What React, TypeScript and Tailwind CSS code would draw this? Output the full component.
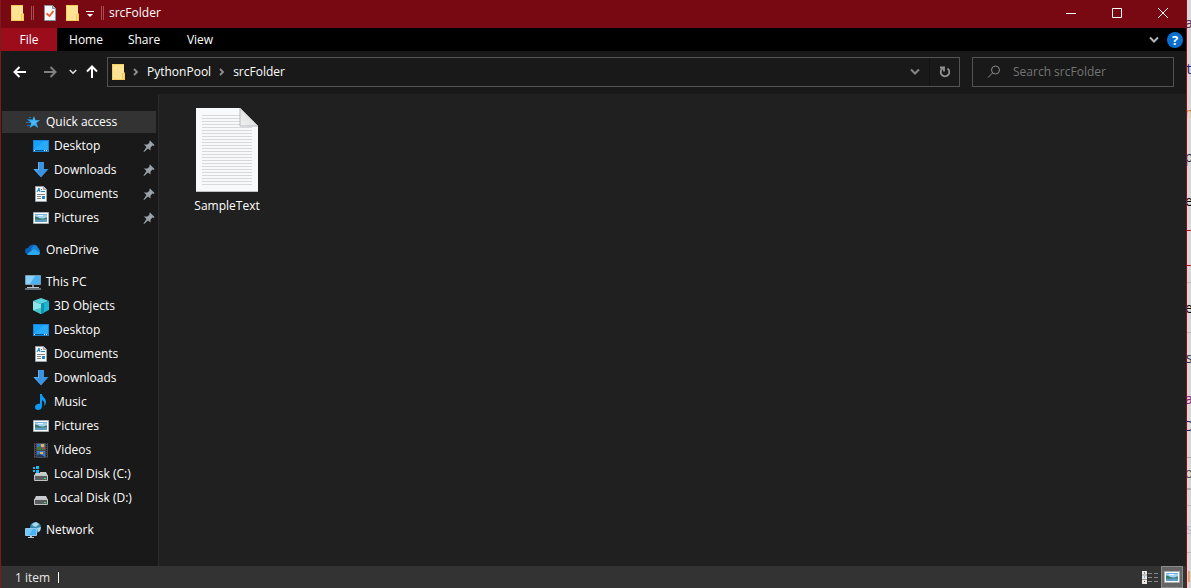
import React from "react";

type IconProps = { className?: string };

const Folder = ({ className = "" }: IconProps) => (
  <svg viewBox="0 0 16 18" className={`w-4 h-[18px] shrink-0 ${className}`}>
    <path d="M1 1h12v8l1 1v7H1z" fill="#ffe394" />
    <path d="M1 1h12v1H1zM1 1h1v16H1zM1 16h13v1H1z" fill="#f5cf5c" />
    <path d="M11 10h3v7h-3z" fill="#f3c94f" />
    <path d="M12 11h1v5h-1z" fill="#ffe08a" />
  </svg>
);

const CheckPage = () => (
  <svg viewBox="0 0 14 18" className="w-3.5 h-[18px] shrink-0">
    <path d="M1.500 1.500h8l3 3v12h-11z" fill="#f4f6f8" stroke="#8793a0" />
    <path d="M9.500 1.500v3h3" fill="#c7d0d8" stroke="#8793a0" />
    <path d="M3.500 9.500l3 2.500 4-5" fill="none" stroke="#e8592b" strokeWidth="1.800" />
  </svg>
);

const Star = () => (
  <svg viewBox="0 0 16 16" className="w-4 h-4">
    <path d="M9 2l1.500 4.200L15 6l-3.500 3 1.700 5L9 11.200 4.500 14l1.700-5L3 6h4.300z" fill="#35adf5" />
    <path d="M2 5.500h5M1 8.500h5M2 11.500h4M4 3.500h2" stroke="#1d75b8" />
    <path d="M9 4l1 3h3l-3 2 1 3-2-2-3 2 1-3-2-2h3z" fill="#49b9fa" />
  </svg>
);

const Desktop = () => (
  <svg viewBox="0 0 16 16" className="w-4 h-4">
    <path d="M0 2h16v12H0z" fill="#1683dc" />
    <path d="M1 3h14v9H1z" fill="#18a0fb" />
    <path d="M1 12L11 3h4v9z" fill="#33b1ff" opacity=".6" />
    <path d="M1 12h14v1H1z" fill="#0b568f" />
    <path d="M1 12h1v1H1zM11 12h1v1h-1zM13 12h1v1h-1z" fill="#fff" />
  </svg>
);

const Download = () => (
  <svg viewBox="0 0 16 16" className="w-4 h-4">
    <path d="M5 0h6v7h4.500L8 15.500.5 7H5z" fill="#3a93e0" />
    <path d="M5 0h1v8H2.500L8 15 .5 7H5z" fill="#64b0ee" />
  </svg>
);

const Document = () => (
  <svg viewBox="0 0 16 16" className="w-4 h-4">
    <path d="M2.500.5h8l3 3v12h-11z" fill="#f7f8f9" stroke="#9a9fa4" />
    <path d="M10.500.5v3h3" fill="#d5d9dc" stroke="#9a9fa4" />
    <path d="M4 6l2-4 1 4M5 4.500h2M8 3.500h1M8 5.500h4" fill="none" stroke="#2284cf" />
    <path d="M4 8.500h8M4 10.500h4M4 12.500h4" stroke="#7d8790" />
    <path d="M9 10h3v3H9z" fill="#2588b8" />
  </svg>
);

const Picture = () => (
  <svg viewBox="0 0 16 16" className="w-4 h-4">
    <path d="M.5 2.500h15v11H.5z" fill="#fff" stroke="#a7acb0" />
    <path d="M2 4h12v8H2z" fill="#a5d2f7" />
    <path d="M2 4h12v1H2z" fill="#6faee8" />
    <path d="M2 6.500c3 0 4 2 7 2s3-1 5-1V10H2z" fill="#3a7a6b" />
    <path d="M2 9.500c5 1 8-1 12 0V12H2z" fill="#5d9cc6" />
    <path d="M5 5h5v1H5z" fill="#f0f8ff" />
  </svg>
);

const OneDrive = () => (
  <svg viewBox="0 0 16 16" className="w-4 h-4">
    <path d="M3 12a3 3 0 0 1 0-6 5 5 0 0 1 9-1 4 4 0 0 1 1 7z" fill="#0c5fb4" />
    <path d="M6 7l3-4a4 4 0 0 1 4 4 3 3 0 0 1 1 5H8z" fill="#1686dc" />
    <path d="M2 12l7-5 6 4-1 2H4q-2 0-2-1z" fill="#2ba9ed" />
  </svg>
);

const Computer = () => (
  <svg viewBox="0 0 16 16" className="w-4 h-4">
    <path d="M.5 1.500h15v9H.5z" fill="#49b2f5" stroke="#7c9aad" />
    <path d="M1 2h9l-5 8H1z" fill="#8bd0fb" />
    <path d="M7 11h2v2H7z" fill="#8498a5" />
    <path d="M2 13.500h12M0 15h16" stroke="#b9c7d0" />
  </svg>
);

const Cube = () => (
  <svg viewBox="0 0 16 16" className="w-4 h-4">
    <path d="M8 0l8 3-8 3-8-3z" fill="#56d4e2" />
    <path d="M0 3l8 3v10l-8-4z" fill="#8ce6ea" />
    <path d="M16 3L8 6v10l8-4z" fill="#1ab4d4" />
    <path d="M8 10v6l-8-4z" fill="#45c5c8" />
    <path d="M8 6l3-1v10l-3 1z" fill="#0f94ad" />
  </svg>
);

const Music = () => (
  <svg viewBox="0 0 16 16" className="w-4 h-4">
    <path d="M7 0h2c0 3 4 4 4 8 0 2-1 3-2 4 1-3 0-5-2-6v6c0 3-2 4-4 4s-3-1-3-3 3-4 5-3z" fill="#0a9bf5" />
  </svg>
);

const Video = () => (
  <svg viewBox="0 0 16 16" className="w-4 h-4">
    <path d="M1 1h14v15H1z" fill="#4b4b4b" />
    <path d="M2.500 1v15M13.500 1v15" stroke="#191919" strokeDasharray="1 1" />
    <path d="M4 2h8v6H4zM4 9h8v6H4z" fill="#3978d0" />
    <path d="M4 6l3-2 5 4H4z" fill="#45733b" />
    <path d="M8 2h3v3H8zM7 10h3v2H7z" fill="#e9b548" />
    <path d="M10 5h2v2h-2z" fill="#c43d3d" />
    <path d="M4 13l3-1 5 3H4z" fill="#263b59" />
  </svg>
);

const Disk = ({ windows = false }: { windows?: boolean }) => (
  <svg viewBox="0 0 16 16" className="w-4 h-4">
    <path d="M3 6h10l2 4H1z" fill="#c8cbcd" />
    <path d="M1 10h14v4H1z" fill="#5b5e60" />
    <path d="M1 9.500h14M1.500 10v4.500h13V10" fill="none" stroke="#bfc3c5" />
    <path d="M11 12h2v1h-2z" fill="#3de254" />
    {windows && (
      <>
        <path d="M0 0h7v7H0z" fill="#191919" />
        <path d="M0 1h2v2H0zM3 0h3v3H3zM0 4h2v2H0zM3 4h3v3H3z" fill="#16b9f4" />
      </>
    )}
  </svg>
);

const Network = () => (
  <svg viewBox="0 0 16 16" className="w-4 h-4">
    <circle cx="10.500" cy="5.500" r="5.500" fill="#3c88ad" />
    <path d="M7 2l4-2 3 2-3 3-3-1zM12 6l4-1-1 4-2 1z" fill="#a9d9e9" />
    <path d="M.5 6.500h11v7H.5z" fill="#45b3f7" stroke="#93c9eb" />
    <path d="M1 7h7l-4 6H1z" fill="#75c8fb" />
    <path d="M5 14h2v1H5zM3 15h6v1H3z" fill="#b9c7d0" />
  </svg>
);

const Pin = () => (
  <svg viewBox="0 0 12 12" className="w-3 h-3">
    <path d="M7 .5L11.500 5l-1 1-1-.5-2 2v3L5 8.500 1 12l-.5-.5L3.500 7 1 4.500h3.500l2-2V1z" fill="#9aa3ab" />
  </svg>
);

const Chevron = ({ className = "" }: IconProps) => (
  <svg viewBox="0 0 10 8" className={`h-2 ${className}`}>
    <path d="M1 1.500l4 4 4-4" fill="none" stroke="currentColor" strokeWidth="2" />
  </svg>
);

const Separator = () => (
  <svg viewBox="0 0 6 12" className="w-1.5 h-3 text-[#8f8f8f]">
    <path d="M1 3l3 3-3 3" fill="none" stroke="currentColor" strokeWidth="1.800" />
  </svg>
);

const Arrow = ({ className = "" }: IconProps) => (
  <svg viewBox="0 0 14 12" className={`w-3.5 h-3 ${className}`}>
    <path d="M13 6H2M6.500 1L1.500 6l5 5" fill="none" stroke="currentColor" strokeWidth="2" />
  </svg>
);

const Sheet = () => (
  <svg viewBox="0 0 64 86" className="w-16 h-[86px]">
    <defs>
      <linearGradient id="fold" x1="0" y1="1" x2="1" y2="0">
        <stop offset="0" stopColor="#f4f4f4" />
        <stop offset="1" stopColor="#cfcfcf" />
      </linearGradient>
    </defs>
    <path d="M1 1h44l18 18v65H1z" fill="#f8f9fa" />
    <path d="M1 84.500h62" stroke="#bfc2c4" />
    {Array.from({ length: 24 }, (_, i) => (
      <path key={i} d={`M7 ${8.5 + i * 3}h${i < 4 ? 38 : 50}`} stroke="#d6d8d9" />
    ))}
    <path d="M45 1l18 18H45z" fill="url(#fold)" stroke="#b5b7b8" />
  </svg>
);

const groups = [
  {
    name: "Quick access",
    icon: <Star />,
    selected: true,
    items: [
      { name: "Desktop", icon: <Desktop />, pinned: true },
      { name: "Downloads", icon: <Download />, pinned: true },
      { name: "Documents", icon: <Document />, pinned: true },
      { name: "Pictures", icon: <Picture />, pinned: true },
    ],
  },
  { name: "OneDrive", icon: <OneDrive />, items: [] },
  {
    name: "This PC",
    icon: <Computer />,
    items: [
      { name: "3D Objects", icon: <Cube /> },
      { name: "Desktop", icon: <Desktop /> },
      { name: "Documents", icon: <Document /> },
      { name: "Downloads", icon: <Download /> },
      { name: "Music", icon: <Music /> },
      { name: "Pictures", icon: <Picture /> },
      { name: "Videos", icon: <Video /> },
      { name: "Local Disk (C:)", icon: <Disk windows /> },
      { name: "Local Disk (D:)", icon: <Disk /> },
    ],
  },
  { name: "Network", icon: <Network />, items: [] },
];

// edge of the page that sits behind the window
const behind = [
  { text: "a", style: "h-[46px] text-[#4a2a6a]" },
  { text: "t", style: "h-[45px] text-[#1d2b6b]" },
  { text: "n", style: "h-11 text-[#c9822f]" },
  { text: "p", style: "h-11 text-[#1d1d4d]" },
  { text: "e", style: "h-11 text-black" },
  { text: "", style: "h-2 border-b border-[#b3121f]" },
  { text: "", style: "h-[35px] border-b border-[#b3121f]" },
  { text: "", style: "h-[17px] border-b border-[#bbb]" },
  { text: "e", style: "h-[50px] border-b border-[#bbb] text-black" },
  { text: "s", style: "h-[50px] text-[#2b3553]" },
  { text: "a", style: "h-8 text-[#7a2a8f]" },
  { text: "D", style: "h-[22px] text-[#1c1c6e]" },
  { text: "", style: "h-[21px] border-b border-[#aaa]" },
  { text: "o", style: "h-8 border-b-2 border-[#aaa] text-[#555]" },
  { text: "", style: "h-4 border-b border-[#bbb]" },
  { text: "s", style: "h-[47px] border-b border-[#bbb] text-[#b9bccb]" },
  { text: "l", style: "h-[35px] text-[#d98a1c] pt-3" },
];

const TitleBar = () => (
  <header className="flex h-7 items-center bg-[#780912] pb-0.5 pl-[9px]">
    <Folder />
    <div className="ml-[5px] h-3.5 w-[3px] border-x border-[#a84d54]" />
    <button aria-label="Properties" className="ml-[9px]">
      <CheckPage />
    </button>
    <button aria-label="New folder" className="ml-2">
      <Folder />
    </button>
    <button aria-label="Customize toolbar" className="ml-[5px] pt-0.5">
      <svg viewBox="0 0 8 8" className="w-2 h-2">
        <path d="M0 1.500h8" stroke="#fff" />
        <path d="M1 4h6L4 7z" fill="#fff" />
      </svg>
    </button>
    <div className="ml-[7px] h-3.5 w-[3px] border-x border-[#a84d54]" />
    <h1 className="ml-[5px]">srcFolder</h1>
    <div className="ml-auto flex h-full">
      <button aria-label="Minimize" className="flex w-[46px] items-center justify-center">
        <svg viewBox="0 0 10 10" className="w-2.5 h-2.5">
          <path d="M0 5.500h10" stroke="#fff" />
        </svg>
      </button>
      <button aria-label="Maximize" className="flex w-[46px] items-center justify-center">
        <svg viewBox="0 0 10 10" className="w-2.5 h-2.5">
          <path d="M.5.500h9v9h-9z" fill="none" stroke="#fff" />
        </svg>
      </button>
      <button aria-label="Close" className="flex w-[46px] items-center justify-center">
        <svg viewBox="0 0 10 10" className="w-2.5 h-2.5">
          <path d="M0 0l10 10M10 0L0 10" stroke="#fff" />
        </svg>
      </button>
    </div>
  </header>
);

const Ribbon = () => (
  <nav className="flex h-[23px] items-stretch bg-black">
    <button className="w-14 bg-[#9b0d1b]">File</button>
    <button className="w-[58px]">Home</button>
    <button className="w-[58px]">Share</button>
    <button className="w-[54px]">View</button>
    <div className="ml-auto flex items-center gap-1 pr-[3px]">
      <button aria-label="Expand ribbon" className="p-1">
        <Chevron className="w-2.5 text-[#b5b5b5]" />
      </button>
      <button
        aria-label="Help"
        className="h-4 w-4 rounded-full bg-[#0b6fd0] text-[13px] font-bold leading-4"
      >
        ?
      </button>
    </div>
  </nav>
);

const AddressBar = () => (
  <div className="flex h-[43px] items-start bg-[#191919] pt-1.5 pr-3">
    <div className="flex h-[30px] w-[106px] shrink-0 items-center pl-3">
      <button aria-label="Back">
        <Arrow />
      </button>
      <button aria-label="Forward" className="ml-4">
        <Arrow className="rotate-180 text-[#808080]" />
      </button>
      <button aria-label="Recent locations" className="ml-3">
        <Chevron className="w-2 text-[#e0e0e0]" />
      </button>
      <button aria-label="Up" className="ml-2">
        <Arrow className="rotate-90" />
      </button>
    </div>
    <div className="flex h-[30px] flex-1 items-center border border-[#535353] pl-[3px]">
      <Folder />
      <div className="ml-1.5 flex items-center gap-2">
        <Separator />
        <button>PythonPool</button>
        <Separator />
        <button>srcFolder</button>
      </div>
      <button aria-label="Previous locations" className="ml-auto mr-[5px] p-1">
        <Chevron className="w-2.5 text-[#858585]" />
      </button>
      <button
        aria-label="Refresh"
        className="flex h-full w-[30px] items-center justify-center border-l border-[#111]"
      >
        <svg viewBox="0 0 12 12" className="w-3 h-3">
          <path d="M3.500 2.500a4.300 4.300 0 1 0 5 0M1 1.500h4v4" fill="none" stroke="#929292" strokeWidth="1.800" />
        </svg>
      </button>
    </div>
    <label className="ml-3 flex h-[30px] w-[202px] items-center border border-[#535353] pl-3.5">
      <svg viewBox="0 0 14 14" className="w-3.5 h-3.5 shrink-0">
        <circle cx="8.500" cy="5" r="4" fill="none" stroke="#8a8a8a" />
        <path d="M5.500 8L1 12.500" stroke="#8a8a8a" />
      </svg>
      <input
        type="search"
        aria-label="Search srcFolder"
        placeholder="Search srcFolder"
        className="ml-3 w-full min-w-0 bg-transparent outline-none placeholder:text-[#757575]"
      />
    </label>
  </div>
);

const Sidebar = () => (
  <aside className="flex w-[158px] shrink-0 flex-col gap-2 border-r border-[#2b2b2b] bg-[#191919] pt-4 pl-px pr-0.5">
    {groups.map((group) => (
      <div key={group.name}>
        <div
          className={`my-px flex h-[22px] items-center gap-[5px] pl-[23px] ${
            group.selected ? "bg-[#333]" : ""
          }`}
        >
          {group.icon}
          <span>{group.name}</span>
        </div>
        {group.items.map((item) => (
          <div key={item.name} className="flex h-6 items-center gap-[5px] pl-[31px] pr-px">
            {item.icon}
            <span className="mr-auto">{item.name}</span>
            {"pinned" in item && <Pin />}
          </div>
        ))}
      </div>
    ))}
  </aside>
);

const StatusBar = () => (
  <footer className="flex h-[22px] items-center bg-[#333] pl-3.5">
    <span className="pt-0.5 text-[#e8e8e8]">1 item</span>
    <div className="ml-2 h-[11px] w-px bg-white" />
    <div className="ml-auto flex h-full items-center">
      <button aria-label="Details view" className="mr-0.5">
        <svg viewBox="0 0 18 14" className="w-[18px] h-3.5">
          <path d="M1 1h5v13H1z" fill="#e8e8e8" />
          <path d="M1 5h5M1 9.500h5" stroke="#999" />
          <path d="M3 2.500h1v1H3z" fill="#333" />
          <path d="M3 6.500h1v1H3z" fill="#1f78c8" />
          <path d="M3 11h1v1H3z" fill="#b3121f" />
          <path d="M7 3.500h4M13 3.500h4M7 7.500h4M13 7.500h4M7 11.500h4M13 11.500h4" stroke="#888" />
        </svg>
      </button>
      <button
        aria-label="Large icons"
        className="mr-[3px] flex h-full w-[22px] items-center justify-center border border-[#8a8a8a] bg-[#666]"
      >
        <Picture />
      </button>
    </div>
  </footer>
);

export default function App() {
  return (
    <div className="flex min-h-screen bg-[#d9d7d7] font-['Open_Sans','Noto_Sans',sans-serif] text-xs text-white">
      <div className="flex min-w-0 flex-1 flex-col border-l border-r border-l-[#7c1a20] border-r-[#8e0c18]">
        <TitleBar />
        <Ribbon />
        <AddressBar />
        <div className="flex flex-1 bg-[#202020]">
          <Sidebar />
          <main className="flex-1 pt-[13px] pl-6">
            <button className="flex w-[88px] flex-col items-center gap-[5px]">
              <Sheet />
              <span>SampleText</span>
            </button>
          </main>
        </div>
        <StatusBar />
      </div>
      <div aria-hidden="true" className="w-1 shrink-0 overflow-hidden">
        {behind.map((row, i) => (
          <div key={i} className={`flex items-center justify-center text-sm ${row.style}`}>
            {row.text}
          </div>
        ))}
      </div>
    </div>
  );
}
